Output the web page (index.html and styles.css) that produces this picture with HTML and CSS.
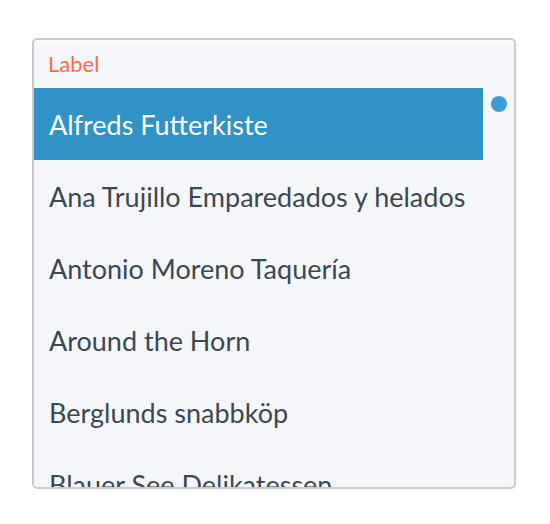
FILE: index.html
```html
<!DOCTYPE html>
<html>
<head>
<meta charset="utf-8">
<link rel="stylesheet" href="styles.css">
</head>
<body>
<div class="field">
  <div class="label">Label</div>
  <div class="body">
    <ul class="list">
      <li class="item selected">Alfreds Futterkiste</li>
      <li class="item">Ana Trujillo Emparedados y helados</li>
      <li class="item">Antonio Moreno Taquería</li>
      <li class="item">Around the Horn</li>
      <li class="item">Berglunds snabbköp</li>
      <li class="item">Blauer See Delikatessen</li>
      <li class="item">Blondel père et fils</li>
    </ul>
    <div class="gutter"><span class="dot"></span></div>
  </div>
</div>
</body>
</html>
```
FILE: styles.css
```css
html, body {
  margin: 0;
  padding: 0;
  background: #ffffff;
}
body {
  padding: 38px 0 0 32px;
  font-family: "Lato", "Liberation Sans", sans-serif;
}
.field {
  box-sizing: border-box;
  width: 484px;
  height: 451px;
  border: 2px solid #c7cbce;
  border-radius: 5px;
  background: #f5f6fa;
  box-shadow: inset 0 10px 10px -8px #ffffff;
  display: flex;
  flex-direction: column;
  overflow: hidden;
}
.label {
  height: 48px;
  box-sizing: border-box;
  padding: 0 0 1px 14px;
  display: flex;
  align-items: center;
  font-size: 22px;
  color: #ff6b3f;
}
.body {
  flex: 1;
  display: flex;
  overflow: hidden;
}
.list {
  list-style: none;
  margin: 0;
  padding: 0;
  width: 449px;
  flex: none;
}
.item {
  height: 72px;
  box-sizing: border-box;
  padding: 0 0 0 15px;
  display: flex;
  align-items: center;
  font-size: 27px;
  color: #3c4850;
  white-space: nowrap;
}
.item.selected {
  background: #3192c5;
  color: #ffffff;
}
.gutter {
  flex: 1;
  display: flex;
  justify-content: center;
  align-items: flex-start;
  padding-top: 8px;
}
.dot {
  width: 16px;
  height: 16px;
  border-radius: 50%;
  background: #3a9fd9;
}
```
